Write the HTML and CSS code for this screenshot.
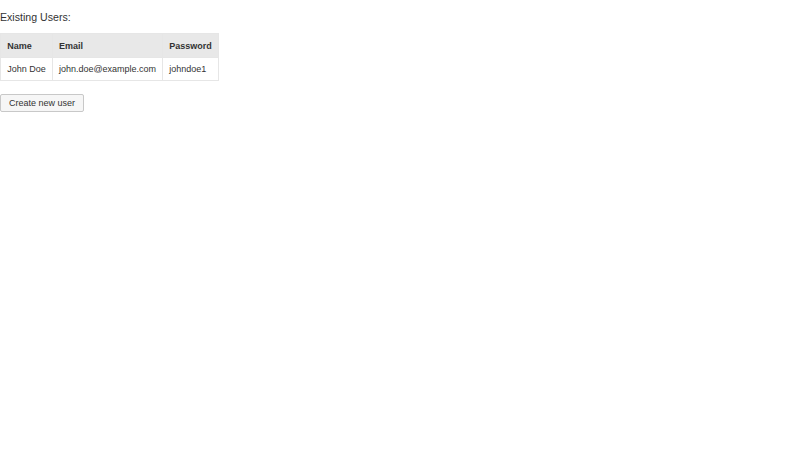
FILE: index.html
```html
<!DOCTYPE html>
<html>
<head>
<meta charset="utf-8">
<link rel="stylesheet" href="styles.css">
</head>
<body>
<p class="title">Existing Users:</p>
<table class="users">
<thead>
<tr><th>Name</th><th>Email</th><th>Password</th></tr>
</thead>
<tbody>
<tr><td>John Doe</td><td>john.doe@example.com</td><td>johndoe1</td></tr>
</tbody>
</table>
<button class="btn">Create new user</button>
</body>
</html>
```
FILE: styles.css
```css
body {
  margin: 0;
  font-family: "Liberation Sans", Arial, sans-serif;
  color: #333;
  background: #fff;
}
.title {
  margin: 11px 0 9px 0;
  font-size: 10.6px;
  line-height: 13px;
}
.users {
  border-collapse: collapse;
  font-size: 9px;
  margin-bottom: 13px;
}
.users th, .users td {
  border: 1px solid #e6e6e6;
  padding: 0 6px 0 6.2px;
  height: 22px;
  text-align: left;
}
.users th {
  background: #e8e8e8;
  font-weight: bold;
  height: 23px;
}
.btn {
  display: block;
  font-family: "Liberation Sans", Arial, sans-serif;
  font-size: 9px;
  color: #333;
  background: #f6f6f6;
  border: 1px solid #c8c8c8;
  border-radius: 2px;
  height: 18px;
  padding: 0 8px;
  margin: 0;
}
```
